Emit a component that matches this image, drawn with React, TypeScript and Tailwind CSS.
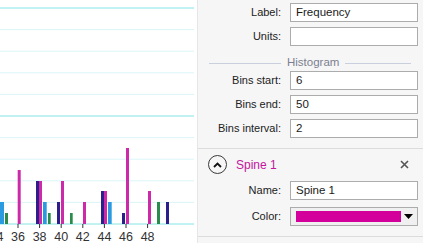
import React from 'react'

const NAVY = '#2b1f8c'
const MAG = '#cc2aa8'
const BLUE = '#2a9be0'
const GREEN = '#2a8c4c'

// [x, width, top, color]
const bars: [number, number, number, string][] = [
  [0, 4, 202, BLUE],
  [5, 3, 213, GREEN],
  [17.7, 3, 170, MAG],
  [36, 3, 181, NAVY],
  [39, 3, 181, MAG],
  [43, 3.7, 202, BLUE],
  [48, 2.7, 213, GREEN],
  [57, 3, 202, NAVY],
  [61, 3, 181, MAG],
  [70, 2.7, 213, GREEN],
  [83, 3, 202, MAG],
  [101, 3, 191, NAVY],
  [104, 3, 191, MAG],
  [108, 3.7, 202, BLUE],
  [122, 3, 213, NAVY],
  [126, 3, 148, MAG],
  [148, 3, 191, MAG],
  [157, 3, 202, GREEN],
  [166, 3, 202, NAVY],
]

const ticks = [34, 36, 38, 40, 42, 44, 46, 48]

function Chart() {
  const lines = Array.from({ length: 11 }, (_, i) => 8 + i * 21.6)
  return (
    <svg width="197" height="243" viewBox="0 0 197 243" className="block">
      {lines.map((y, i) => (
        <line key={i} x1="0" x2="194" y1={y} y2={y} stroke={i % 5 === 0 ? '#86e4e4' : '#daf5f8'} strokeWidth="1" />
      ))}
      {bars.map(([x, w, top, c], i) => (
        <rect key={i} x={x} y={top} width={w} height={224 - top} fill={c} />
      ))}
      {ticks.map((t, i) => {
        const x = -3.6 + i * 21.6
        return (
          <g key={t}>
            <line x1={x} x2={x} y1="224" y2="228" stroke="#333" strokeWidth="1" />
            <text x={x} y="240.5" textAnchor="middle" fontSize="12.5" fill="#333" fontFamily="'Liberation Sans', Arial, sans-serif">{t}</text>
          </g>
        )
      })}
    </svg>
  )
}

function Row({ label, value, className = '' }: { label: string; value?: string; className?: string }) {
  return (
    <div className={`flex items-center h-[19px] ${className}`}>
      <div className="w-[83px] text-right text-[11px] text-[#222]">{label}</div>
      <div className="ml-[9px] w-[128px] h-[19px] border border-[#acacac] bg-white flex items-center px-[5px] text-[11.5px] text-[#1a1a1a]">
        {value}
      </div>
    </div>
  )
}

export default function App() {
  return (
    <div className="w-[423px] h-[243px] flex overflow-hidden bg-white" style={{ fontFamily: "'Liberation Sans', Arial, sans-serif" }}>
      <div className="w-[197px] shrink-0 bg-white">
        <Chart />
      </div>
      <div className="w-[226px] shrink-0 h-full bg-[#f6f6f6] border-l border-[#e6e6e6] flex flex-col pt-[3px]">
        <Row label="Label:" value="Frequency" />
        <Row label="Units:" className="mt-[5px]" />

        <div className="mt-[10px] h-[14px] flex items-center">
          <div className="ml-[11px] w-[72px] border-t border-[#c9cfdc]" />
          <div className="mx-[6px] text-[11.5px] text-[#7b8090]">Histogram</div>
          <div className="flex-1 mr-[12px] border-t border-[#c9cfdc]" />
        </div>

        <Row label="Bins start:" value="6" className="mt-[1px]" />
        <Row label="Bins end:" value="50" className="mt-[5px]" />
        <Row label="Bins interval:" value="2" className="mt-[5px]" />

        <div className="mt-[10px] border-t border-[#dcdcdc]" />

        <div className="h-[31px] flex items-center">
          <div className="ml-[10px] w-[19px] h-[19px] rounded-full border border-[#3a3a3a] flex items-center justify-center">
            <svg width="9" height="6" viewBox="0 0 9 6">
              <path d="M1 5 L4.5 1.5 L8 5" fill="none" stroke="#111" strokeWidth="1.8" />
            </svg>
          </div>
          <div className="ml-[9px] text-[12px] text-[#c2179e]">Spine 1</div>
          <div className="ml-auto mr-[14px] text-[#555]">
            <svg width="9" height="9" viewBox="0 0 9 9">
              <path d="M1 1 L8 8 M8 1 L1 8" stroke="#555" strokeWidth="1.6" />
            </svg>
          </div>
        </div>

        <Row label="Name:" value="Spine 1" className="mt-[1px]" />

        <div className="flex items-center h-[19px] mt-[7px]">
          <div className="w-[83px] text-right text-[11px] text-[#222]">Color:</div>
          <div className="ml-[9px] w-[128px] h-[19px] border border-[#acacac] bg-[#f0f0f0] flex items-center pl-[5px] pr-[4px]">
            <div className="w-[105px] h-[11px] bg-[#d4009c]" />
            <svg width="9" height="5" viewBox="0 0 9 5" className="ml-auto">
              <path d="M0 0 L9 0 L4.5 5 Z" fill="#000" />
            </svg>
          </div>
        </div>

        <div className="mt-[10px] border-t border-[#dcdcdc]" />
      </div>
    </div>
  )
}
